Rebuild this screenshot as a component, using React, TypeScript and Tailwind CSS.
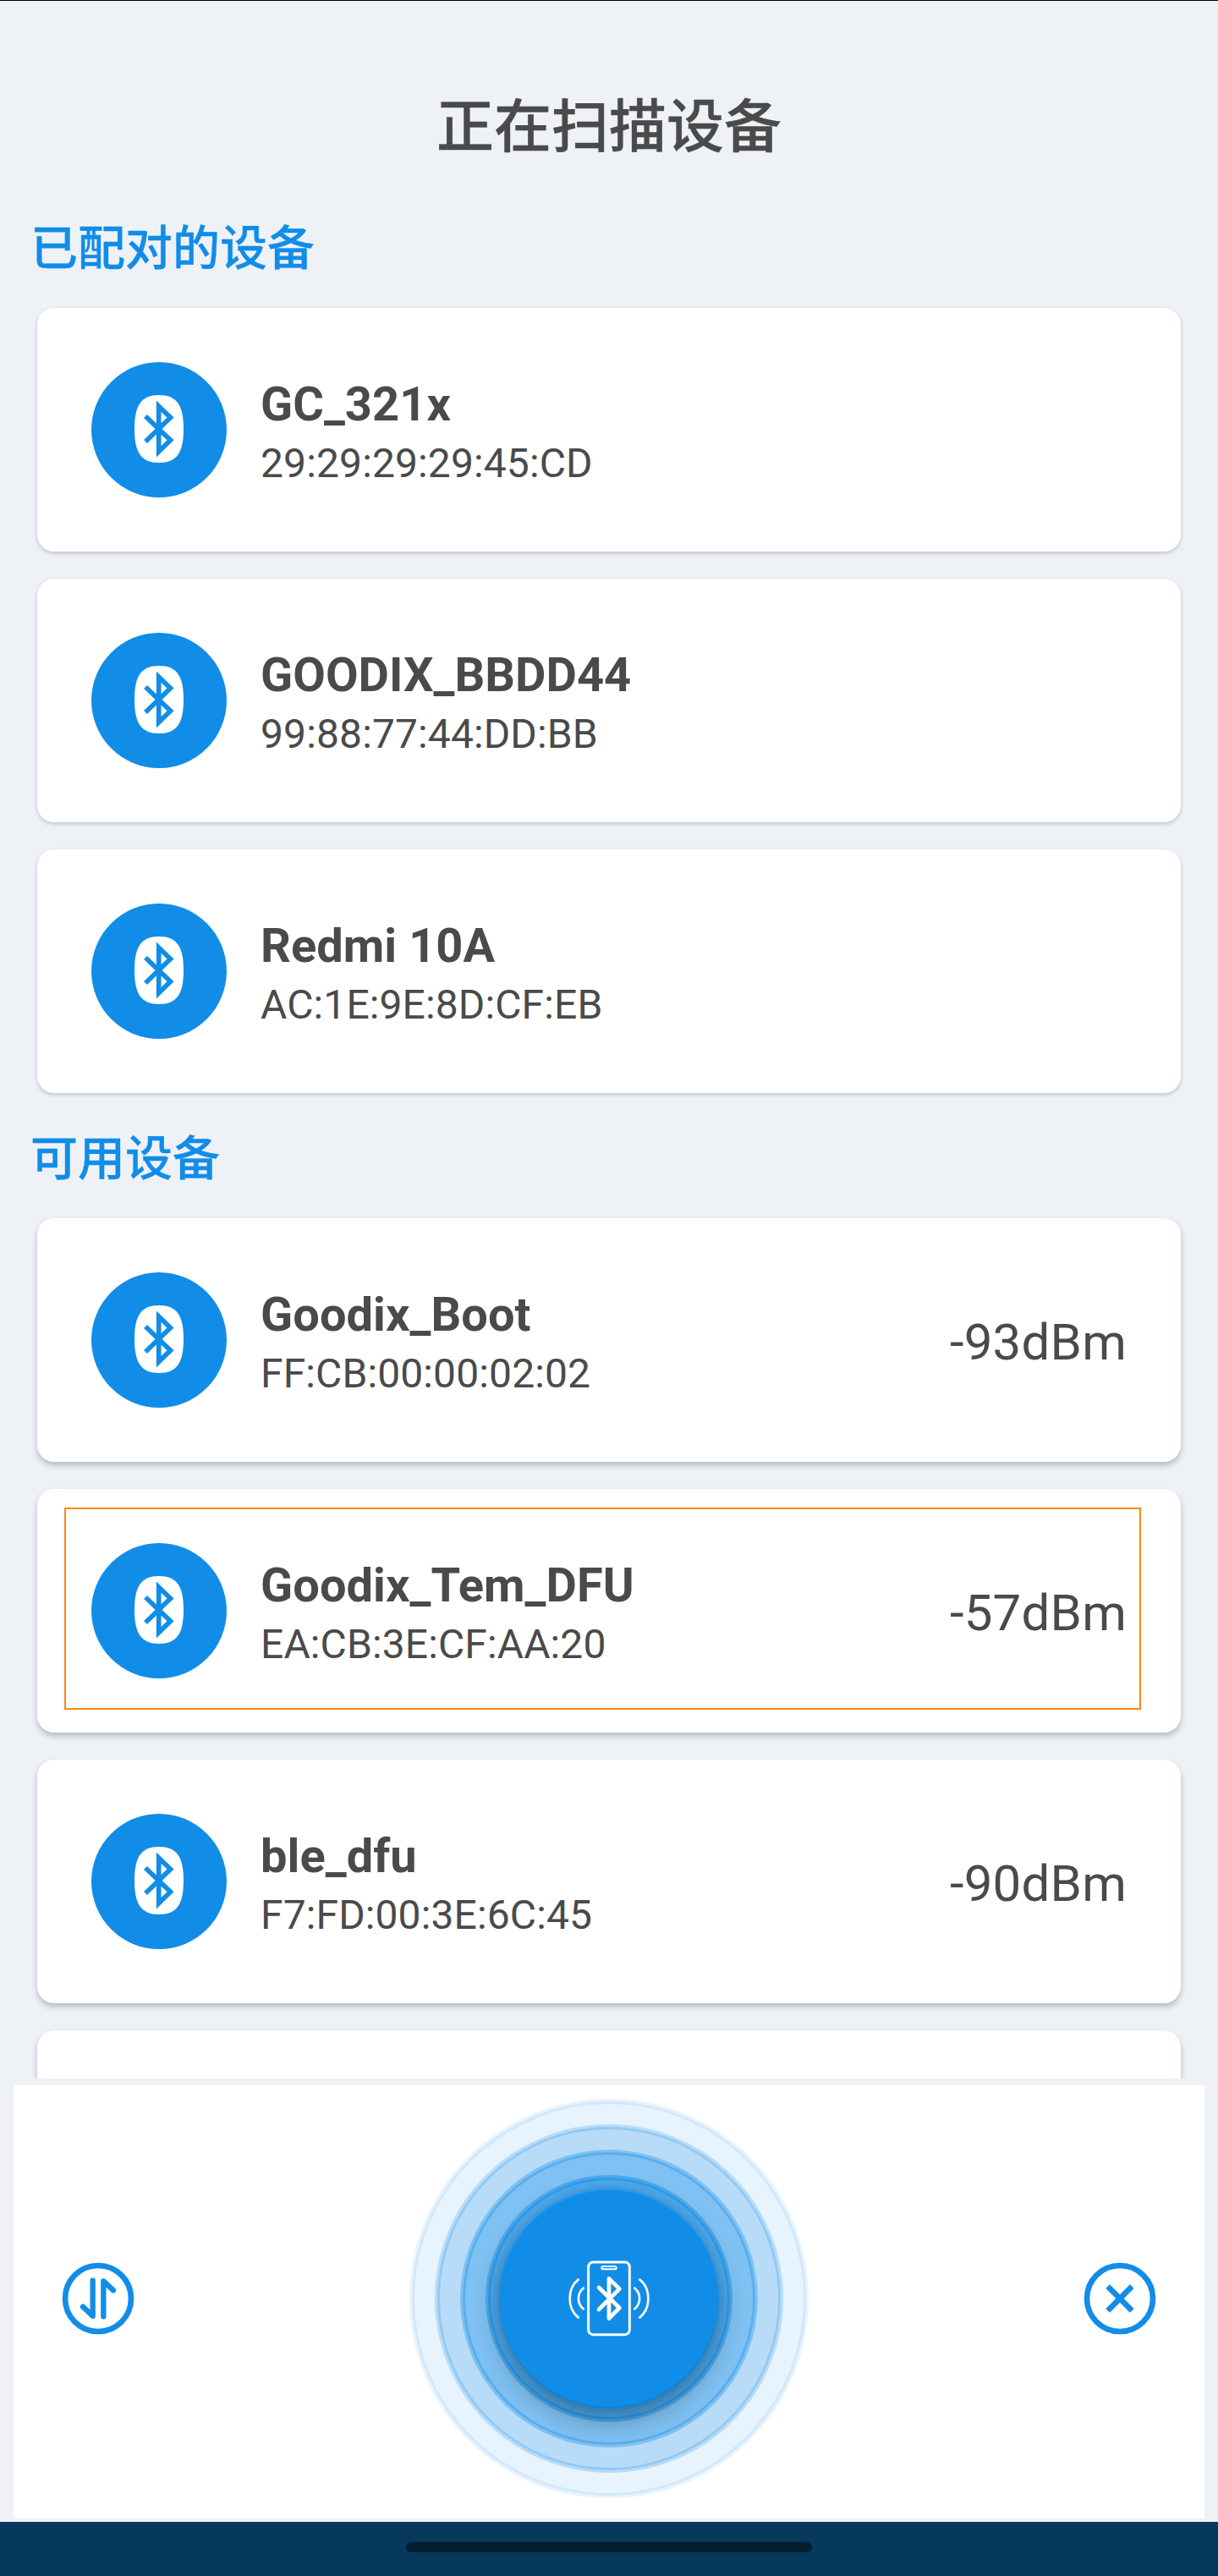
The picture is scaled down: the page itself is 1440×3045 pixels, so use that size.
import { useState } from "react";

const pairedDevices = [
  { name: "GC_321x", address: "29:29:29:29:45:CD" },
  { name: "GOODIX_BBDD44", address: "99:88:77:44:DD:BB" },
  { name: "Redmi 10A", address: "AC:1E:9E:8D:CF:EB" },
];

const availableDevices = [
  { name: "Goodix_Boot", address: "FF:CB:00:00:02:02", rssi: -93 },
  { name: "Goodix_Tem_DFU", address: "EA:CB:3E:CF:AA:20", rssi: -57 },
  { name: "ble_dfu", address: "F7:FD:00:3E:6C:45", rssi: -90 },
];

const ripples = [
  { r: 233, opacity: 0.1 },
  { r: 203, opacity: 0.22 },
  { r: 173, opacity: 0.34 },
  { r: 143, opacity: 0.46 },
];

function BluetoothBadge() {
  return (
    <svg className="w-40 h-40 flex-shrink-0" viewBox="0 0 160 160" fill="none">
      <circle cx="80" cy="80" r="80" fill="#118de8" />
      <path d="M80 39c21 0 29 12 29 40s-8 40-29 40-29-12-29-40 8-40 29-40Z" fill="#fff" />
      <path d="M64 64 93.5 92.3 79.7 105.8V52.2L93.5 65.5 64 94" stroke="#118de8" strokeWidth="5.7" />
    </svg>
  );
}

function DeviceCard({ device, selected, onClick, shadow }: { device: any; selected?: boolean; onClick?: () => void; shadow: string }) {
  return (
    <div onClick={onClick} className={`relative flex items-center h-72 bg-white rounded-[20px] px-16 flex-shrink-0 ${shadow}`}>
      {selected && <div className="absolute left-8 right-[47px] top-[22px] bottom-[27px] border-2 border-[#ff870d]" />}
      <BluetoothBadge />
      <div className="ml-10 flex-1 pt-[3px]">
        <p className="text-[56px] leading-[68px] font-bold tracking-[0.05px]">{device.name}</p>
        <p className="text-[48px] leading-[56px] mt-2 tracking-[0.12px]">{device.address}</p>
      </div>
      {device.rssi !== undefined && <span className="text-[60px] leading-[70px] pt-[5px] tracking-[0.2px]">{device.rssi}dBm</span>}
    </div>
  );
}

export default function App() {
  const [selected, setSelected] = useState("EA:CB:3E:CF:AA:20");

  return (
    <div className="w-[1440px] h-[3045px] bg-[#eef2f7] border-t border-black flex flex-col overflow-hidden text-[#4a4a4a] font-['Roboto','Noto_Sans_CJK_SC',sans-serif]">

      {/* DEVICE LIST */}
      <div className="h-[2456px] px-11 flex flex-col overflow-hidden flex-shrink-0">
        <h1 className="mt-25 h-[100px] leading-[100px] text-[68px] font-medium text-center flex-shrink-0 [-webkit-text-stroke:0.4px_#4a4a4a]">正在扫描设备</h1>

        <h2 className="mt-[53px] h-20 leading-20 -ml-2 text-[56px] font-medium text-[#118de8] flex-shrink-0 [-webkit-text-stroke:0.3px_#118de8]">已配对的设备</h2>
        <div className="mt-[30px] flex flex-col gap-8">
          {pairedDevices.map(d => (
            <DeviceCard key={d.address} device={d} shadow="shadow-[0_2px_5px_rgba(0,0,0,0.2)]" />
          ))}
        </div>

        <h2 className="mt-[38px] h-20 leading-20 -ml-2 text-[56px] font-medium text-[#118de8] flex-shrink-0 [-webkit-text-stroke:0.3px_#118de8]">可用设备</h2>
        <div className="mt-[30px] flex flex-col gap-8">
          {availableDevices.map(d => (
            <DeviceCard key={d.address} device={d} selected={selected === d.address} onClick={() => setSelected(d.address)}
              shadow="shadow-[0_4px_7px_rgba(0,0,0,0.24)]" />
          ))}
          <div className="h-72 bg-white rounded-[20px] shadow-[0_4px_7px_rgba(0,0,0,0.24)] flex-shrink-0" />
        </div>
      </div>

      {/* SCAN PANEL */}
      <div className="mt-2 mx-4 h-[512px] bg-white flex items-center justify-between px-14 pb-2 flex-shrink-0">
        <button className="w-22 h-22">
          <svg className="w-22 h-22" viewBox="0 0 264 264" fill="none" stroke="#118de8">
            <circle cx="132" cy="132" r="117" strokeWidth="20" />
            <path d="M113 68V194L78 161" strokeWidth="19" strokeLinecap="round" strokeLinejoin="round" />
            <path d="M151 196V70L186 103" strokeWidth="19" strokeLinecap="round" strokeLinejoin="round" />
          </svg>
        </button>

        <button className="relative w-[472px] h-[472px] flex items-center justify-center">
          <svg className="absolute inset-0" width="472" height="472" viewBox="0 0 472 472">
            {ripples.map(({ r, opacity }) => (
              <circle key={r} cx="236" cy="236" r={r} fill="#118de8" fillOpacity={opacity} stroke="#118de8" strokeOpacity={opacity} strokeWidth="6" />
            ))}
          </svg>
          <span className="relative w-[260px] h-[260px] rounded-full bg-[#118de8] flex items-center justify-center shadow-[0_14px_32px_rgba(0,0,0,0.3),0_0_8px_rgba(0,0,0,0.1),inset_0_2px_1px_rgba(255,255,255,0.1),inset_0_-2px_1px_rgba(0,0,0,0.08)]">
            <svg width="160" height="154" viewBox="0 0 480 462" fill="none" stroke="#fff" strokeLinecap="round" strokeLinejoin="round">
              <rect x="167" y="102" width="146" height="257" rx="17" strokeWidth="9" />
              <rect x="214" y="117" width="52" height="10" rx="5" strokeWidth="6" />
              <path d="M204 192 277 264 240 302V160L277 197 204 270" strokeWidth="14" />
              <path d="M131 164C91 195 91 267 131 298M149 194C126 213 126 249 149 268M349 164C389 195 389 267 349 298M331 194C354 213 354 249 331 268" strokeWidth="8" />
            </svg>
          </span>
        </button>

        <button className="w-22 h-22">
          <svg className="w-22 h-22" viewBox="0 0 264 264" fill="none" stroke="#118de8">
            <circle cx="132" cy="132" r="117" strokeWidth="20" />
            <path d="M89 89 175 175M175 89 89 175" strokeWidth="20" />
          </svg>
        </button>
      </div>

      {/* SYSTEM NAVIGATION BAR */}
      <div className="mt-1 h-16 bg-[#07395c] flex justify-center items-start pt-6 flex-shrink-0">
        <div className="w-[480px] h-3 rounded-full bg-[#021d2e]" />
      </div>
    </div>
  );
}
